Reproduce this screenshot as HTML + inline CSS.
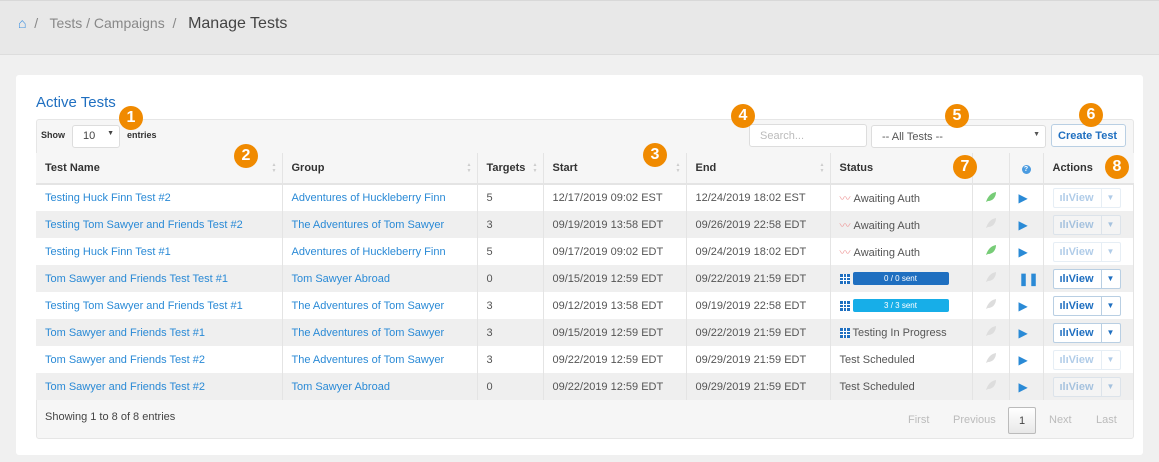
<!DOCTYPE html><html><head><style>
*{box-sizing:border-box;margin:0;padding:0}
body{width:1159px;height:462px;background:#f0f0f0;font-family:"Liberation Sans",sans-serif;font-size:11px;color:#555;position:relative;overflow:hidden}
.hdr{position:absolute;left:0;top:0;width:1159px;height:55px;background:#e8e8e8;border-bottom:1px solid #ddd;border-top:1px solid #d8d8d8}
.bc{position:absolute;top:15px;left:18px;font-size:14px;color:#888}
.bc b{font-weight:normal;color:#444;font-size:16px}
.card{position:absolute;left:16px;top:75px;width:1127px;height:380px;background:#fff;border-radius:3px}
.title{position:absolute;left:36px;top:94px;font-size:15px;color:#1f6fc0}
.box{position:absolute;left:36px;top:119px;width:1098px;height:320px;border:1px solid #e6e6e6;border-radius:3px;background:#f6f6f6}
table{position:absolute;left:36px;top:153px;border-collapse:collapse;width:1098px;font-size:11px}
th{height:31px;text-align:left;padding-left:9px;color:#333;font-weight:bold;background:#f6f6f6;border-bottom:2px solid #e4e4e4;border-right:1px solid #e4e4e4;position:relative}
th.s::after{content:"▲\A▼";white-space:pre;position:absolute;right:5px;top:9px;font-size:5px;line-height:6px;color:#ccc}
td{height:27px;padding-left:9px;border-right:1px solid #e4e4e4;white-space:nowrap}
tr:nth-child(even) td{background:#fff} tr:nth-child(odd) td{background:#efefef}
a{color:#2a8ad6;text-decoration:none}
.o{position:absolute;width:24px;height:24px;border-radius:50%;background:#f08a00;color:#fff;font-weight:bold;font-size:16px;text-align:center;line-height:24px}
.in{position:absolute;background:#fff;border:1px solid #ddd;border-radius:3px;height:23px;font-size:11px;color:#bbb;padding:5px 10px}
.btn{display:inline-flex;height:20px;border:1px solid #b9cfe3;border-radius:2px;font-weight:bold;font-size:11px;color:#1f6fc0;vertical-align:middle;background:#fff}
.btn span{padding:3px 4px 0 6px;border-right:1px solid #b9cfe3;width:48px}
.btn i{width:18px;text-align:center;font-style:normal;font-size:8px;line-height:18px}
.dis{opacity:.35}
.play{color:#2a8ad6;font-size:12px}
.bar{display:inline-block;width:96px;height:13px;border-radius:2px;color:#fff;font-size:8px;text-align:center;line-height:13px;vertical-align:middle}
.grid{display:inline-block;width:10px;height:10px;background:#1f6fc0;vertical-align:middle;margin-right:3px;background-image:linear-gradient(90deg,transparent 3px,#fff 3px,#fff 4px,transparent 4px,transparent 6px,#fff 6px,#fff 7px,transparent 7px),linear-gradient(transparent 3px,#fff 3px,#fff 4px,transparent 4px,transparent 6px,#fff 6px,#fff 7px,transparent 7px)}
.q{display:inline-block;width:9px;height:9px;border-radius:50%;background:#4a9be0;color:#fff;font-size:7px;text-align:center;line-height:9px}
.pg{position:absolute;top:407px;font-size:11px;color:#bbb}
.lf{text-align:center;padding:0}
</style></head><body>
<div class="hdr"></div>
<div class="bc"><span style="color:#3a8fe0">&#8962;</span> &nbsp;/&nbsp;&nbsp; Tests / Campaigns &nbsp;/&nbsp;&nbsp; <b>Manage Tests</b></div>
<div class="card"></div>
<div class="title">Active Tests</div>
<div class="box"></div>
<div style="position:absolute;left:41px;top:130px;font-size:9px;font-weight:bold;color:#333">Show</div>
<div class="in" style="left:72px;top:125px;width:48px;color:#444;padding:4px 10px">10<span style="position:absolute;right:5px;font-size:7px">▼</span></div>
<div style="position:absolute;left:127px;top:130px;font-size:9px;font-weight:bold;color:#333">entries</div>
<div class="in" style="left:749px;top:124px;width:118px">Search...</div>
<div class="in" style="left:871px;top:125px;width:175px;color:#555">-- All Tests --<span style="position:absolute;right:5px;font-size:7px">▼</span></div>
<div class="in" style="left:1051px;top:124px;width:75px;border-color:#b9cfe3;color:#1f6fc0;font-weight:bold;padding:5px 6px;background:#fdfdfd">Create Test</div>
<svg width="0" height="0" style="position:absolute"><defs><symbol id="leaf" viewBox="0 0 12 12"><path d="M1 11C3 5 6 2 11 1C11 6 8 10 3 10Z" fill="currentColor"/></symbol></defs></svg>
<table>
<tr><th class="s" style="width:246px">Test Name</th><th class="s" style="width:195px">Group</th><th class="s" style="width:66px">Targets</th><th class="s" style="width:143px">Start</th><th class="s" style="width:144px">End</th><th style="width:142px">Status<span style="float:right;margin-right:8px" class="q">?</span></th><th style="width:37px"></th><th style="width:34px;text-align:center;padding:0"><span class="q">?</span></th><th style="border-right:0">Actions</th></tr>
<tr><td><a>Testing Huck Finn Test #2</a></td><td><a>Adventures of Huckleberry Finn</a></td><td>5</td><td>12/17/2019 09:02 EST</td><td>12/24/2019 18:02 EST</td><td><span style="color:#e99">〰</span> Awaiting Auth</td><td class="lf" style="color:#7c7"><svg width="12" height="12"><use href="#leaf"/></svg></td><td class="play">▶</td><td><span class="btn dis"><span>ılıView</span><i>▼</i></span></td></tr>
<tr><td><a>Testing Tom Sawyer and Friends Test #2</a></td><td><a>The Adventures of Tom Sawyer</a></td><td>3</td><td>09/19/2019 13:58 EDT</td><td>09/26/2019 22:58 EDT</td><td><span style="color:#e99">〰</span> Awaiting Auth</td><td class="lf" style="color:#ddd"><svg width="12" height="12"><use href="#leaf"/></svg></td><td class="play">▶</td><td><span class="btn dis"><span>ılıView</span><i>▼</i></span></td></tr>
<tr><td><a>Testing Huck Finn Test #1</a></td><td><a>Adventures of Huckleberry Finn</a></td><td>5</td><td>09/17/2019 09:02 EDT</td><td>09/24/2019 18:02 EDT</td><td><span style="color:#e99">〰</span> Awaiting Auth</td><td class="lf" style="color:#7c7"><svg width="12" height="12"><use href="#leaf"/></svg></td><td class="play">▶</td><td><span class="btn dis"><span>ılıView</span><i>▼</i></span></td></tr>
<tr><td><a>Tom Sawyer and Friends Test Test #1</a></td><td><a>Tom Sawyer Abroad</a></td><td>0</td><td>09/15/2019 12:59 EDT</td><td>09/22/2019 21:59 EDT</td><td><span class="grid"></span><span class="bar" style="background:#1f6fc0">0 / 0 sent</span></td><td class="lf" style="color:#ddd"><svg width="12" height="12"><use href="#leaf"/></svg></td><td class="play" style="font-weight:bold">❚❚</td><td><span class="btn"><span>ılıView</span><i>▼</i></span></td></tr>
<tr><td><a>Testing Tom Sawyer and Friends Test #1</a></td><td><a>The Adventures of Tom Sawyer</a></td><td>3</td><td>09/12/2019 13:58 EDT</td><td>09/19/2019 22:58 EDT</td><td><span class="grid"></span><span class="bar" style="background:#17aee8">3 / 3 sent</span></td><td class="lf" style="color:#ddd"><svg width="12" height="12"><use href="#leaf"/></svg></td><td class="play">▶</td><td><span class="btn"><span>ılıView</span><i>▼</i></span></td></tr>
<tr><td><a>Tom Sawyer and Friends Test #1</a></td><td><a>The Adventures of Tom Sawyer</a></td><td>3</td><td>09/15/2019 12:59 EDT</td><td>09/22/2019 21:59 EDT</td><td><span class="grid"></span>Testing In Progress</td><td class="lf" style="color:#ddd"><svg width="12" height="12"><use href="#leaf"/></svg></td><td class="play">▶</td><td><span class="btn"><span>ılıView</span><i>▼</i></span></td></tr>
<tr><td><a>Tom Sawyer and Friends Test #2</a></td><td><a>The Adventures of Tom Sawyer</a></td><td>3</td><td>09/22/2019 12:59 EDT</td><td>09/29/2019 21:59 EDT</td><td>Test Scheduled</td><td class="lf" style="color:#ddd"><svg width="12" height="12"><use href="#leaf"/></svg></td><td class="play">▶</td><td><span class="btn dis"><span>ılıView</span><i>▼</i></span></td></tr>
<tr><td><a>Tom Sawyer and Friends Test #2</a></td><td><a>Tom Sawyer Abroad</a></td><td>0</td><td>09/22/2019 12:59 EDT</td><td>09/29/2019 21:59 EDT</td><td>Test Scheduled</td><td class="lf" style="color:#ddd"><svg width="12" height="12"><use href="#leaf"/></svg></td><td class="play">▶</td><td><span class="btn dis"><span>ılıView</span><i>▼</i></span></td></tr>
</table>
<div style="position:absolute;left:45px;top:411px;color:#444">Showing 1 to 8 of 8 entries</div>
<div class="pg" style="left:908px;top:414px">First</div>
<div class="pg" style="left:953px;top:414px">Previous</div>
<div style="position:absolute;left:1008px;top:407px;width:28px;height:27px;border:1px solid #bbb;border-radius:2px;background:linear-gradient(#fff,#e8e8e8);text-align:center;line-height:26px;color:#444">1</div>
<div class="pg" style="left:1049px;top:414px">Next</div>
<div class="pg" style="left:1096px;top:414px">Last</div>
<div class="o" style="left:119px;top:106px">1</div>
<div class="o" style="left:234px;top:144px">2</div>
<div class="o" style="left:643px;top:143px">3</div>
<div class="o" style="left:731px;top:104px">4</div>
<div class="o" style="left:945px;top:104px">5</div>
<div class="o" style="left:1079px;top:103px">6</div>
<div class="o" style="left:953px;top:155px">7</div>
<div class="o" style="left:1105px;top:155px">8</div>
</body></html>
